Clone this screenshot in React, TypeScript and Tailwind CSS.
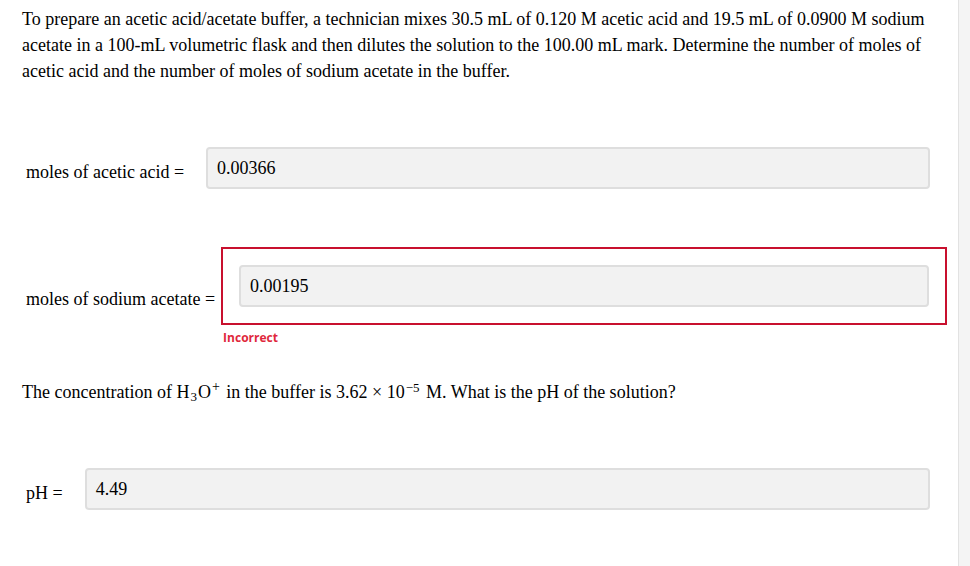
import React from 'react';

const serif = { fontFamily: '"Liberation Serif", "Times New Roman", serif' };

const AnswerInput: React.FC<{ value: string }> = ({ value }) => (
  <div className="flex-1 h-[42px] flex items-center rounded-[4px] border-2 border-[#dedede] bg-[#f2f2f2] pl-[9px] text-[18px] text-black">
    {value}
  </div>
);

const App: React.FC = () => {
  return (
    <div className="flex w-[970px] h-[566px] bg-white overflow-hidden text-black" style={serif}>
      <div className="flex-1 pl-[22px] pr-[28px] pt-[6px]">
        {/* Question text */}
        <p className="text-[18px] leading-[26px]">
          To prepare an acetic acid/acetate buffer, a technician mixes 30.5 mL of 0.120 M acetic acid and 19.5 mL of 0.0900 M sodium
          acetate in a 100-mL volumetric flask and then dilutes the solution to the 100.00 mL mark. Determine the number of moles of
          acetic acid and the number of moles of sodium acetate in the buffer.
        </p>

        {/* Acetic acid row */}
        <div className="flex items-start mt-[63px]">
          <span className="ml-[4px] mt-[12px] mr-[22px] text-[18px] leading-[26px] whitespace-nowrap">moles of acetic acid =</span>
          <AnswerInput value="0.00366" />
        </div>

        {/* Sodium acetate row, marked incorrect */}
        <div className="flex items-start mt-[58px]">
          <span className="ml-[4px] mt-[39px] mr-[6px] text-[18px] leading-[26px] whitespace-nowrap">moles of sodium acetate =</span>
          <div className="flex-1 -mr-[17px]">
            <div className="flex border-2 border-[#c8102e] p-[16px]">
              <AnswerInput value="0.00195" />
            </div>
            <div
              className="mt-[6px] ml-[2px] text-[12px] font-bold text-[#e0283c] leading-[14px]"
              style={{ fontFamily: '"Open Sans", "Liberation Sans", sans-serif' }}
            >
              Incorrect
            </div>
          </div>
        </div>

        {/* pH question */}
        <p className="mt-[34px] text-[18px] leading-[26px] whitespace-nowrap">
          The concentration of H<sub className="text-[13px] mx-[1px]">3</sub>O<sup className="text-[14px] ml-[1px] mr-[2px]">+</sup> in the buffer is 3.62 × 10<sup className="text-[13px] ml-[1px] mr-[2px]">−5</sup> M. What is the pH of the solution?
        </p>

        <div className="flex items-start mt-[63px]">
          <span className="ml-[4px] mt-[12px] mr-[22px] text-[18px] leading-[26px] whitespace-nowrap">pH =</span>
          <AnswerInput value="4.49" />
        </div>
      </div>

      {/* Scrollbar track */}
      <div className="w-[12px] h-full border-l border-[#e2e2e2] bg-[#f4f4f4]" />
    </div>
  );
};

export default App;
